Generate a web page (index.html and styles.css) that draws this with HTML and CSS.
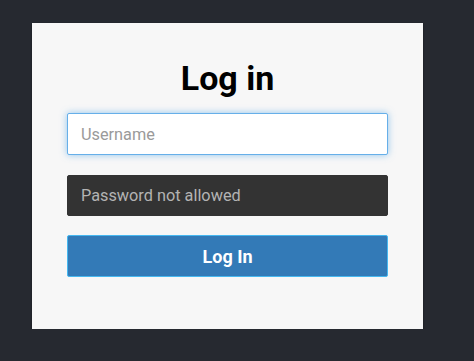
FILE: index.html
```html
<!DOCTYPE html>
<html lang="en">
<head>
    <meta charset="UTF-8">
    <meta name="viewport" content="width=device-width, initial-scale=1.0">
    <title>Log in</title>
    <link rel="stylesheet" href="styles.css">
</head>
<body>
    <div class="tarjeta">
        <h1 class="titulo">Log in</h1>
        <form class="formulario">
            <input class="campo campo-usuario" type="text" placeholder="Username">
            <input class="campo campo-clave" type="text" placeholder="Password not allowed" disabled>
            <button class="boton" type="button">Log In</button>
        </form>
    </div>
</body>
</html>
```

FILE: styles.css
```css
body {
    background-color: #262930;
    margin: 0;
    padding: 23px 0 0 32px;
    font-family: Roboto, "Liberation Sans", sans-serif;
}

.tarjeta {
    width: 391px;
    height: 306px;
    box-sizing: border-box;
    background-color: #f7f7f7;
    padding: 35px 35px 0 35px;
    box-shadow: 0 1px 2px rgba(0, 0, 0, 0.4);
}

.titulo {
    margin: 0;
    font-size: 34px;
    font-weight: 700;
    line-height: 40px;
    text-align: center;
    color: #000;
}

.formulario {
    margin-top: 15px;
    display: flex;
    flex-direction: column;
    gap: 20px;
}

.campo {
    height: 42px;
    box-sizing: border-box;
    padding: 0 13px;
    font-family: inherit;
    font-size: 16.3px;
    border-radius: 2px;
    outline: none;
}

.campo::placeholder {
    color: #9a9a9a;
}

.campo-usuario {
    background: #fff;
    border: 1px solid #66afe9;
    box-shadow: 0 0 7px rgba(102, 175, 233, 0.7);
}

.campo-clave {
    height: 41px;
    background: #333;
    border: 1px solid #333;
}

.campo-clave::placeholder {
    color: #b3b3b3;
}

.boton {
    height: 42px;
    margin-top: -1px;
    background: #337ab7;
    border: 1px solid #46b8f0;
    border-radius: 2px;
    color: #fff;
    font-family: inherit;
    font-size: 18px;
    font-weight: 700;
    cursor: pointer;
}
```
